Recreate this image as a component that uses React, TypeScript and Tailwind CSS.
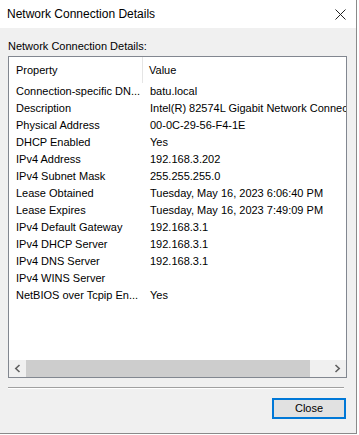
import React from "react";

const rows: [string, string][] = [
  ["Connection-specific DN...", "batu.local"],
  ["Description", "Intel(R) 82574L Gigabit Network Connect"],
  ["Physical Address", "00-0C-29-56-F4-1E"],
  ["DHCP Enabled", "Yes"],
  ["IPv4 Address", "192.168.3.202"],
  ["IPv4 Subnet Mask", "255.255.255.0"],
  ["Lease Obtained", "Tuesday, May 16, 2023 6:06:40 PM"],
  ["Lease Expires", "Tuesday, May 16, 2023 7:49:09 PM"],
  ["IPv4 Default Gateway", "192.168.3.1"],
  ["IPv4 DHCP Server", "192.168.3.1"],
  ["IPv4 DNS Server", "192.168.3.1"],
  ["IPv4 WINS Server", ""],
  ["NetBIOS over Tcpip En...", "Yes"],
];

const font = { fontFamily: '"Liberation Sans", Arial, sans-serif' };

export default function App() {
  return (
    <div className="w-[359px] h-[435px] bg-white text-black" style={font}>
      <div className="w-[357px] h-[434px] flex flex-col border-r border-b border-[#8a8a8a]">
        {/* Title bar */}
        <div className="h-[28px] bg-white flex items-center justify-between pl-[7px] pr-[10px]">
          <span className="text-[12px]">Network Connection Details</span>
          <svg width="11" height="11" viewBox="0 0 11 11" stroke="#222" strokeWidth="1">
            <path d="M0.5 0.5l10 10M10.5 0.5l-10 10" />
          </svg>
        </div>

        {/* Body */}
        <div className="flex-1 bg-[#f0f0f0] flex flex-col px-[8px]">
          <div className="text-[11px] leading-[15px] mt-[11px] mb-[2px]">Network Connection Details:</div>

          <div className="w-[339px] h-[322px] border border-[#828790] bg-white flex flex-col overflow-hidden">
            <div className="h-[26px] flex items-center text-[11px] shrink-0">
              <div className="w-[134px] shrink-0 pl-[7px] h-full flex items-center border-r border-[#e5e5e5]">Property</div>
              <div className="pl-[6px]">Value</div>
            </div>
            {rows.map(([k, v]) => (
              <div key={k} className="h-[17px] flex items-center text-[11px] whitespace-nowrap shrink-0">
                <div className="w-[134px] shrink-0 pl-[7px]">{k}</div>
                <div className="pl-[7px] shrink-0">{v}</div>
              </div>
            ))}
            <div className="flex-1" />
            {/* Horizontal scrollbar */}
            <div className="h-[17px] bg-[#f0f0f0] flex items-center shrink-0">
              <div className="w-[17px] h-full flex items-center justify-center">
                <svg width="7" height="9" viewBox="0 0 7 9" fill="none" stroke="#606060" strokeWidth="1.6">
                  <path d="M5.5 1L1.8 4.5L5.5 8" />
                </svg>
              </div>
              <div className="w-[284px] h-full bg-[#cdcdcd]" />
              <div className="flex-1" />
              <div className="w-[17px] h-full flex items-center justify-center">
                <svg width="7" height="9" viewBox="0 0 7 9" fill="none" stroke="#606060" strokeWidth="1.6">
                  <path d="M1.5 1L5.2 4.5L1.5 8" />
                </svg>
              </div>
            </div>
          </div>

          <div className="mt-[9px] w-[336px] border-t border-[#a0a0a0] border-b border-b-white" />

          <div className="flex justify-end mt-[9px] pr-[2px]">
            <button className="w-[74px] h-[21px] border-2 border-[#0078d7] bg-[#e1e1e1] text-[11px] flex items-center justify-center">
              Close
            </button>
          </div>
        </div>
      </div>
    </div>
  );
}
